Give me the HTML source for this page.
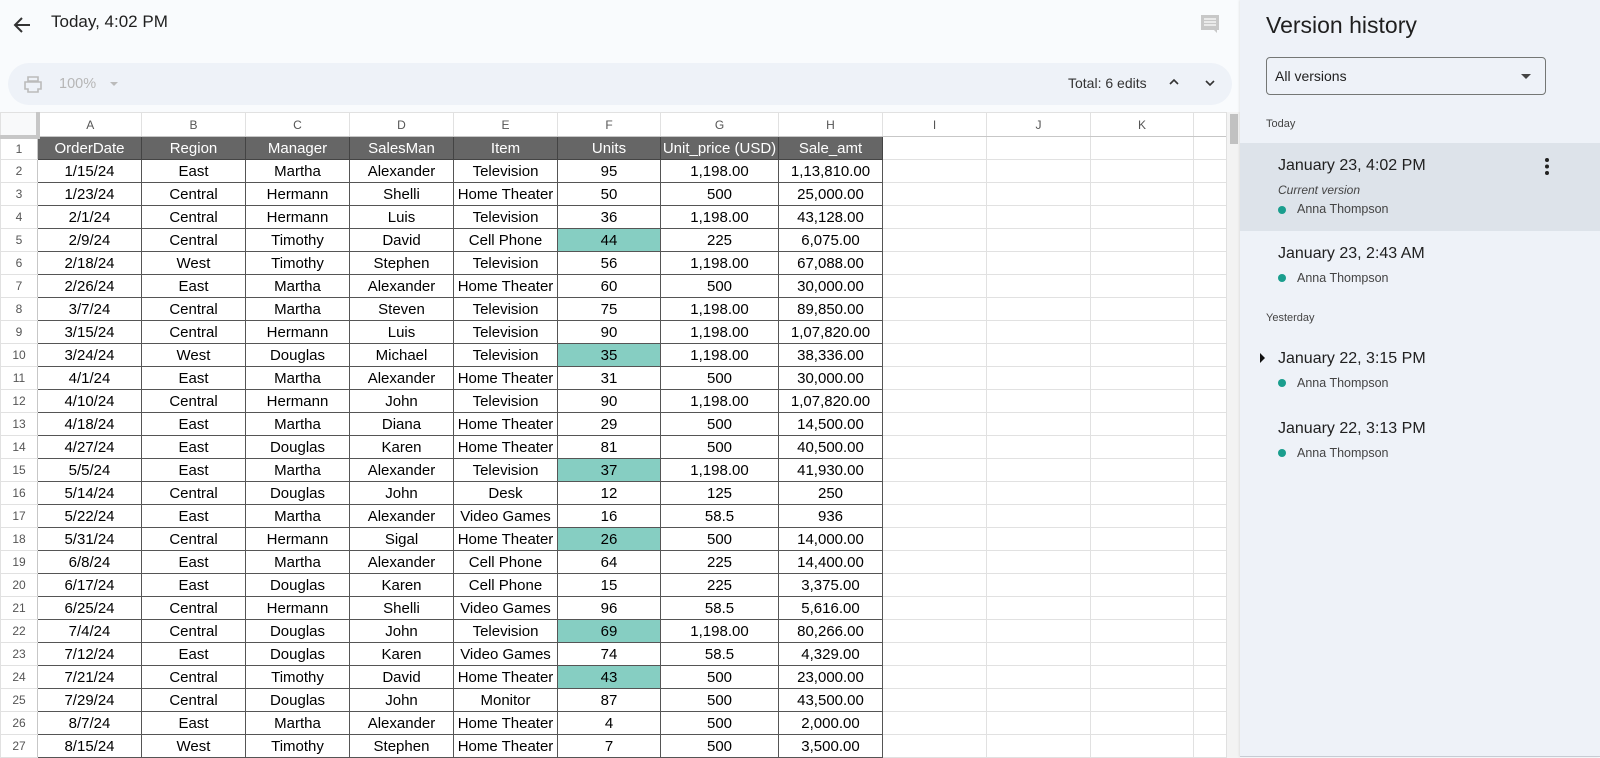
<!DOCTYPE html>
<html><head><meta charset="utf-8"><style>
*{box-sizing:border-box;margin:0;padding:0}
body{width:1600px;height:758px;overflow:hidden;background:#f9fbfd;font-family:"Liberation Sans",Arial,sans-serif;position:relative}
.top{position:absolute;left:0;top:0;width:1240px;height:112px;background:#f9fbfd}
.title{position:absolute;left:51px;top:12px;font-size:17px;color:#1f1f1f}
.pill{position:absolute;left:8px;top:63px;width:1224px;height:42px;border-radius:21px;background:#eef2f8}
.grid{position:absolute;left:0;top:112px;width:1226px;height:646px;overflow:hidden;background:#fff}
table{border-collapse:collapse;table-layout:fixed;width:1226px}
td{height:23px;border:1px solid #e1e1e1;text-align:center;font-size:15px;color:#000;white-space:nowrap;overflow:hidden;padding:0}
tr.ch td{height:24px;background:#fff;color:#555;font-size:12px;border-bottom:1px solid #c7c7c7}
tr.ch td:first-child{background:#f8f9fa;border-right:4px solid #c7c7c7;border-bottom:4px solid #c7c7c7}
td.rh{color:#555;font-size:12px;background:#fff;border-right:1px solid #c7c7c7}
.d td.c{border:1px solid #555}
tr.h td.c{background:#666;color:#fff;border:1px solid #444}
td.g{background:#86cec2 !important}
.sb{position:absolute;left:1226px;top:112px;width:14px;height:646px;background:#f3f3f3;border-left:1px solid #e0e0e0}
.sb div{position:absolute;left:3px;top:2px;width:8px;height:30px;background:#c1c1c1}
.panel{position:absolute;left:1240px;top:0;width:360px;height:757px;background:#eef2f8;border-bottom:1px solid #c7ccd4;box-shadow:-1px 0 2px rgba(0,0,0,.08)}
.vh{position:absolute;left:26px;top:12px;font-size:23px;color:#1f1f1f}
.sel{position:absolute;left:26px;top:57px;width:280px;height:38px;border:1px solid #747775;border-radius:4px;font-size:14px;color:#1f1f1f;padding:10px 8px}
.sel:after{content:"";position:absolute;right:14px;top:16px;border:5px solid transparent;border-top-color:#444}
.sec{position:absolute;left:26px;font-size:11px;color:#444}
.item{position:absolute;left:0;width:360px}
.item .t{position:absolute;left:38px;font-size:16px;color:#1f1f1f}
.item .n{position:absolute;left:57px;font-size:12.5px;color:#444}
.item .dot{position:absolute;left:38px;width:8px;height:8px;border-radius:50%;background:#1a9e8e}
</style></head><body>
<div class="top">
<svg style="position:absolute;left:12px;top:15px" width="20" height="20" viewBox="0 0 20 20"><path d="M18 10H3M10 3L3 10l7 7" stroke="#333" stroke-width="2" fill="none"/></svg>
<div class="title">Today, 4:02 PM</div>
<svg style="position:absolute;left:1199px;top:13px" width="22" height="22" viewBox="0 0 22 22"><path d="M2 2h18v15h-2v3l-3-3H2z" fill="#c8c8c8"/><path d="M5 6h12M5 9h12M5 12h12" stroke="#fff" stroke-width="1.3"/></svg>
<div class="pill">
<svg style="position:absolute;left:16px;top:12px" width="18" height="18" viewBox="0 0 18 18"><path d="M4 2h10v4H4zM1 7h16v7h-3v3H4v-3H1z" fill="none" stroke="#bbb" stroke-width="1.6"/></svg>
<span style="position:absolute;left:51px;top:13px;font-size:14.5px;color:#b6b6b6">100%</span>
<span style="position:absolute;left:102px;top:19px;border:4px solid transparent;border-top-color:#bbb"></span>
<span style="position:absolute;left:1060px;top:12px;font-size:14px;color:#333">Total: 6 edits</span>
<svg style="position:absolute;left:1160px;top:14px" width="12" height="10"><path d="M2 7l4-4 4 4" stroke="#333" stroke-width="1.6" fill="none"/></svg>
<svg style="position:absolute;left:1196px;top:15px" width="12" height="10"><path d="M2 3l4 4 4-4" stroke="#333" stroke-width="1.6" fill="none"/></svg>
</div>
</div>
<div class="grid"><table>
<colgroup><col style="width:37px"><col style="width:104px"><col style="width:104px"><col style="width:104px"><col style="width:104px"><col style="width:104px"><col style="width:103px"><col style="width:118px"><col style="width:104px"><col style="width:104px"><col style="width:104px"><col style="width:103px"><col style="width:33px"></colgroup>
<tr class="ch"><td></td><td>A</td><td>B</td><td>C</td><td>D</td><td>E</td><td>F</td><td>G</td><td>H</td><td>I</td><td>J</td><td>K</td><td></td></tr>
<tbody class="d">
<tr class="h"><td class="rh">1</td><td class="c">OrderDate</td><td class="c">Region</td><td class="c">Manager</td><td class="c">SalesMan</td><td class="c">Item</td><td class="c">Units</td><td class="c">Unit_price (USD)</td><td class="c">Sale_amt</td><td></td><td></td><td></td><td></td></tr>
<tr><td class="rh">2</td><td class="c">1/15/24</td><td class="c">East</td><td class="c">Martha</td><td class="c">Alexander</td><td class="c">Television</td><td class="c">95</td><td class="c">1,198.00</td><td class="c">1,13,810.00</td><td></td><td></td><td></td><td></td></tr>
<tr><td class="rh">3</td><td class="c">1/23/24</td><td class="c">Central</td><td class="c">Hermann</td><td class="c">Shelli</td><td class="c">Home Theater</td><td class="c">50</td><td class="c">500</td><td class="c">25,000.00</td><td></td><td></td><td></td><td></td></tr>
<tr><td class="rh">4</td><td class="c">2/1/24</td><td class="c">Central</td><td class="c">Hermann</td><td class="c">Luis</td><td class="c">Television</td><td class="c">36</td><td class="c">1,198.00</td><td class="c">43,128.00</td><td></td><td></td><td></td><td></td></tr>
<tr><td class="rh">5</td><td class="c">2/9/24</td><td class="c">Central</td><td class="c">Timothy</td><td class="c">David</td><td class="c">Cell Phone</td><td class="c g">44</td><td class="c">225</td><td class="c">6,075.00</td><td></td><td></td><td></td><td></td></tr>
<tr><td class="rh">6</td><td class="c">2/18/24</td><td class="c">West</td><td class="c">Timothy</td><td class="c">Stephen</td><td class="c">Television</td><td class="c">56</td><td class="c">1,198.00</td><td class="c">67,088.00</td><td></td><td></td><td></td><td></td></tr>
<tr><td class="rh">7</td><td class="c">2/26/24</td><td class="c">East</td><td class="c">Martha</td><td class="c">Alexander</td><td class="c">Home Theater</td><td class="c">60</td><td class="c">500</td><td class="c">30,000.00</td><td></td><td></td><td></td><td></td></tr>
<tr><td class="rh">8</td><td class="c">3/7/24</td><td class="c">Central</td><td class="c">Martha</td><td class="c">Steven</td><td class="c">Television</td><td class="c">75</td><td class="c">1,198.00</td><td class="c">89,850.00</td><td></td><td></td><td></td><td></td></tr>
<tr><td class="rh">9</td><td class="c">3/15/24</td><td class="c">Central</td><td class="c">Hermann</td><td class="c">Luis</td><td class="c">Television</td><td class="c">90</td><td class="c">1,198.00</td><td class="c">1,07,820.00</td><td></td><td></td><td></td><td></td></tr>
<tr><td class="rh">10</td><td class="c">3/24/24</td><td class="c">West</td><td class="c">Douglas</td><td class="c">Michael</td><td class="c">Television</td><td class="c g">35</td><td class="c">1,198.00</td><td class="c">38,336.00</td><td></td><td></td><td></td><td></td></tr>
<tr><td class="rh">11</td><td class="c">4/1/24</td><td class="c">East</td><td class="c">Martha</td><td class="c">Alexander</td><td class="c">Home Theater</td><td class="c">31</td><td class="c">500</td><td class="c">30,000.00</td><td></td><td></td><td></td><td></td></tr>
<tr><td class="rh">12</td><td class="c">4/10/24</td><td class="c">Central</td><td class="c">Hermann</td><td class="c">John</td><td class="c">Television</td><td class="c">90</td><td class="c">1,198.00</td><td class="c">1,07,820.00</td><td></td><td></td><td></td><td></td></tr>
<tr><td class="rh">13</td><td class="c">4/18/24</td><td class="c">East</td><td class="c">Martha</td><td class="c">Diana</td><td class="c">Home Theater</td><td class="c">29</td><td class="c">500</td><td class="c">14,500.00</td><td></td><td></td><td></td><td></td></tr>
<tr><td class="rh">14</td><td class="c">4/27/24</td><td class="c">East</td><td class="c">Douglas</td><td class="c">Karen</td><td class="c">Home Theater</td><td class="c">81</td><td class="c">500</td><td class="c">40,500.00</td><td></td><td></td><td></td><td></td></tr>
<tr><td class="rh">15</td><td class="c">5/5/24</td><td class="c">East</td><td class="c">Martha</td><td class="c">Alexander</td><td class="c">Television</td><td class="c g">37</td><td class="c">1,198.00</td><td class="c">41,930.00</td><td></td><td></td><td></td><td></td></tr>
<tr><td class="rh">16</td><td class="c">5/14/24</td><td class="c">Central</td><td class="c">Douglas</td><td class="c">John</td><td class="c">Desk</td><td class="c">12</td><td class="c">125</td><td class="c">250</td><td></td><td></td><td></td><td></td></tr>
<tr><td class="rh">17</td><td class="c">5/22/24</td><td class="c">East</td><td class="c">Martha</td><td class="c">Alexander</td><td class="c">Video Games</td><td class="c">16</td><td class="c">58.5</td><td class="c">936</td><td></td><td></td><td></td><td></td></tr>
<tr><td class="rh">18</td><td class="c">5/31/24</td><td class="c">Central</td><td class="c">Hermann</td><td class="c">Sigal</td><td class="c">Home Theater</td><td class="c g">26</td><td class="c">500</td><td class="c">14,000.00</td><td></td><td></td><td></td><td></td></tr>
<tr><td class="rh">19</td><td class="c">6/8/24</td><td class="c">East</td><td class="c">Martha</td><td class="c">Alexander</td><td class="c">Cell Phone</td><td class="c">64</td><td class="c">225</td><td class="c">14,400.00</td><td></td><td></td><td></td><td></td></tr>
<tr><td class="rh">20</td><td class="c">6/17/24</td><td class="c">East</td><td class="c">Douglas</td><td class="c">Karen</td><td class="c">Cell Phone</td><td class="c">15</td><td class="c">225</td><td class="c">3,375.00</td><td></td><td></td><td></td><td></td></tr>
<tr><td class="rh">21</td><td class="c">6/25/24</td><td class="c">Central</td><td class="c">Hermann</td><td class="c">Shelli</td><td class="c">Video Games</td><td class="c">96</td><td class="c">58.5</td><td class="c">5,616.00</td><td></td><td></td><td></td><td></td></tr>
<tr><td class="rh">22</td><td class="c">7/4/24</td><td class="c">Central</td><td class="c">Douglas</td><td class="c">John</td><td class="c">Television</td><td class="c g">69</td><td class="c">1,198.00</td><td class="c">80,266.00</td><td></td><td></td><td></td><td></td></tr>
<tr><td class="rh">23</td><td class="c">7/12/24</td><td class="c">East</td><td class="c">Douglas</td><td class="c">Karen</td><td class="c">Video Games</td><td class="c">74</td><td class="c">58.5</td><td class="c">4,329.00</td><td></td><td></td><td></td><td></td></tr>
<tr><td class="rh">24</td><td class="c">7/21/24</td><td class="c">Central</td><td class="c">Timothy</td><td class="c">David</td><td class="c">Home Theater</td><td class="c g">43</td><td class="c">500</td><td class="c">23,000.00</td><td></td><td></td><td></td><td></td></tr>
<tr><td class="rh">25</td><td class="c">7/29/24</td><td class="c">Central</td><td class="c">Douglas</td><td class="c">John</td><td class="c">Monitor</td><td class="c">87</td><td class="c">500</td><td class="c">43,500.00</td><td></td><td></td><td></td><td></td></tr>
<tr><td class="rh">26</td><td class="c">8/7/24</td><td class="c">East</td><td class="c">Martha</td><td class="c">Alexander</td><td class="c">Home Theater</td><td class="c">4</td><td class="c">500</td><td class="c">2,000.00</td><td></td><td></td><td></td><td></td></tr>
<tr><td class="rh">27</td><td class="c">8/15/24</td><td class="c">West</td><td class="c">Timothy</td><td class="c">Stephen</td><td class="c">Home Theater</td><td class="c">7</td><td class="c">500</td><td class="c">3,500.00</td><td></td><td></td><td></td><td></td></tr>
</tbody></table></div>
<div class="sb"><div></div></div>
<div class="panel">
<div class="vh">Version history</div>
<div class="sel">All versions</div>
<div class="sec" style="top:118px">Today</div>
<div class="item" style="top:143px;height:88px;background:#dde3ea">
<div class="t" style="top:14px">January 23, 4:02 PM</div>
<div style="position:absolute;left:38px;top:40px;font-size:12px;font-style:italic;color:#444">Current version</div>
<div class="dot" style="top:63px"></div><div class="n" style="top:59px">Anna Thompson</div>
<svg style="position:absolute;left:304px;top:14px" width="6" height="20"><circle cx="3" cy="3" r="2" fill="#222"/><circle cx="3" cy="9.5" r="2" fill="#222"/><circle cx="3" cy="16" r="2" fill="#222"/></svg>
</div>
<div class="item" style="top:231px;height:80px">
<div class="t" style="top:14px">January 23, 2:43 AM</div>
<div class="dot" style="top:43px"></div><div class="n" style="top:40px">Anna Thompson</div>
</div>
<div class="sec" style="top:312px">Yesterday</div>
<div class="item" style="top:336px">
<svg style="position:absolute;left:20px;top:17px" width="6" height="10"><path d="M0 0l5 5-5 5z" fill="#111"/></svg>
<div class="t" style="top:14px">January 22, 3:15 PM</div>
<div class="dot" style="top:43px"></div><div class="n" style="top:40px">Anna Thompson</div>
</div>
<div class="item" style="top:406px">
<div class="t" style="top:14px">January 22, 3:13 PM</div>
<div class="dot" style="top:43px"></div><div class="n" style="top:40px">Anna Thompson</div>
</div>
</div>
</body></html>
